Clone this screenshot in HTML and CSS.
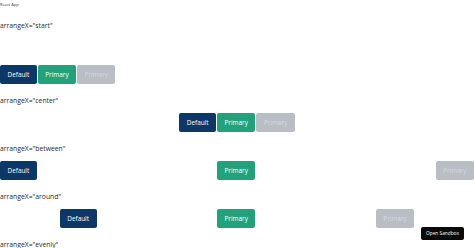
FILE: index.html
```html
<!DOCTYPE html>
<html>
<head>
<meta charset="utf-8">
<title>React App</title>
<link rel="stylesheet" href="styles.css">
</head>
<body>
<div class="title">React App</div>
<div class="stack">
  <section class="section first">
    <p class="label">arrangeX="start"</p>
    <div class="row start">
      <button class="btn default">Default</button>
      <button class="btn primary">Primary</button>
      <button class="btn disabled">Primary</button>
    </div>
  </section>
  <section class="section">
    <p class="label">arrangeX="center"</p>
    <div class="row center">
      <button class="btn default">Default</button>
      <button class="btn primary">Primary</button>
      <button class="btn disabled">Primary</button>
    </div>
  </section>
  <section class="section">
    <p class="label">arrangeX="between"</p>
    <div class="row between">
      <button class="btn default">Default</button>
      <button class="btn primary">Primary</button>
      <button class="btn disabled">Primary</button>
    </div>
  </section>
  <section class="section">
    <p class="label">arrangeX="around"</p>
    <div class="row around">
      <button class="btn default">Default</button>
      <button class="btn primary">Primary</button>
      <button class="btn disabled">Primary</button>
    </div>
  </section>
  <section class="section">
    <p class="label">arrangeX="evenly"</p>
    <div class="row evenly">
      <button class="btn default">Default</button>
      <button class="btn primary">Primary</button>
      <button class="btn disabled">Primary</button>
    </div>
  </section>
</div>
<a class="sandbox">Open Sandbox</a>
</body>
</html>
```
FILE: styles.css
```css
html, body {
  margin: 0;
  padding: 0;
  background: #ffffff;
  overflow: hidden;
  height: 248px;
}
body {
  font-family: "Open Sans", "Liberation Sans", sans-serif;
  color: #2b2b2b;
}
.title {
  font-size: 4px;
  line-height: 9px;
  height: 9px;
  color: #333;
  padding-left: 0;
}
.stack {
  display: flex;
  flex-direction: column;
  gap: 12px;
}
.section.first {
  margin-top: 12px;
}
.section.first .row {
  margin-top: 34px;
}
.label {
  margin: 0;
  font-size: 6.8px;
  line-height: 10px;
  height: 10px;
  color: #2a2a2a;
  white-space: nowrap;
}
.row {
  display: flex;
  margin-top: 7px;
  gap: 1px;
}
.row.start { justify-content: flex-start; }
.row.center { justify-content: center; }
.row.between { justify-content: space-between; }
.row.around { justify-content: space-around; }
.row.evenly { justify-content: space-evenly; }
.btn {
  font-family: "Open Sans", "Liberation Sans", sans-serif;
  font-size: 6.4px;
  height: 19px;
  line-height: 19px;
  padding: 0 7.5px;
  border: none;
  border-radius: 2px;
  color: #ffffff;
  margin: 0;
}
.btn.default { background: #0b3866; }
.btn.primary { background: #22a27b; }
.btn.disabled { background: #b9bdc4; color: #d6d9de; }
.sandbox {
  position: absolute;
  right: 10px;
  top: 227px;
  width: 43px;
  height: 13px;
  line-height: 13px;
  text-align: center;
  background: #0a0a0a;
  color: #ffffff;
  font-size: 4.8px;
  border-radius: 2px;
}
```
